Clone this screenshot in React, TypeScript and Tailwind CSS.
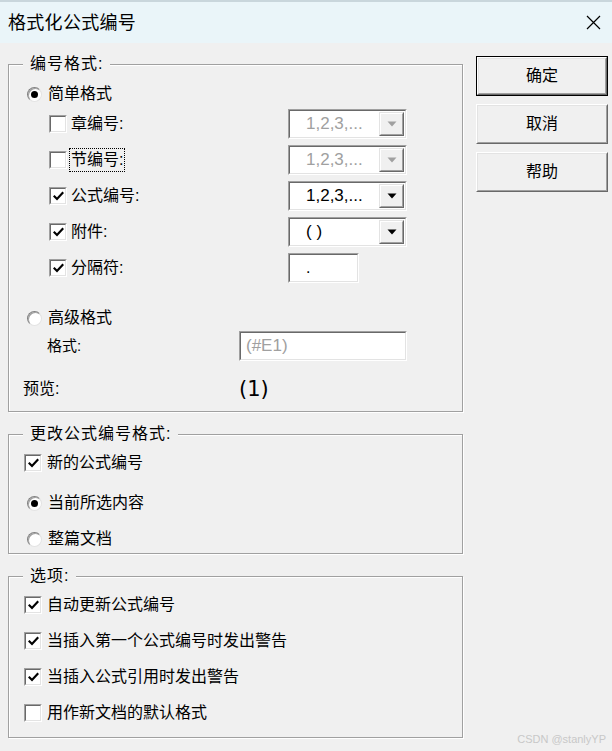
import React from "react";

const FONT = { fontFamily: '"Liberation Sans", "Noto Sans CJK SC", sans-serif' };

function Check() {
  return (
    <svg width="11" height="11" viewBox="0 0 11 11" className="block">
      <path d="M1.5 5.5 L4 8 L9.5 2" fill="none" stroke="#000" strokeWidth="2.2" strokeLinecap="square" />
    </svg>
  );
}

function CheckBox({ checked }: { checked?: boolean }) {
  return (
    <div className="w-[18px] h-[18px] shrink-0 border border-t-[#a0a0a0] border-l-[#a0a0a0] border-b-[#ffffff] border-r-[#ffffff]">
      <div className="w-full h-full border border-t-[#696969] border-l-[#696969] border-b-[#e3e3e3] border-r-[#e3e3e3] bg-white flex items-center justify-center">
        {checked && <Check />}
      </div>
    </div>
  );
}

function Radio({ checked }: { checked?: boolean }) {
  return (
    <div className="w-[15px] h-[15px] shrink-0 rounded-full border border-t-[#808080] border-l-[#808080] border-b-[#e3e3e3] border-r-[#e3e3e3] bg-white flex items-center justify-center shadow-[inset_1px_1px_0_#a0a0a0]">
      {checked && <div className="w-[7px] h-[7px] rounded-full bg-black" />}
    </div>
  );
}

function Combo({ text, disabled }: { text: string; disabled?: boolean }) {
  return (
    <div className="w-[119px] h-[30px] border border-t-[#a0a0a0] border-l-[#a0a0a0] border-b-white border-r-white">
      <div className="w-full h-full border border-t-[#696969] border-l-[#696969] border-b-[#e3e3e3] border-r-[#e3e3e3] bg-white flex items-center justify-between pl-[16px] pr-[1px]">
        <span className={`text-[17px] leading-[20px] ${disabled ? "text-[#a0a0a0]" : "text-black"}`}>{text}</span>
        <div className="w-[25px] h-[24px] border border-t-[#e3e3e3] border-l-[#e3e3e3] border-b-[#696969] border-r-[#696969]">
          <div className="w-full h-full bg-[#f0f0f0] border border-t-white border-l-white border-b-[#a0a0a0] border-r-[#a0a0a0] flex items-center justify-center">
            <svg width="10" height="6" viewBox="0 0 10 6" className="block">
              <path d="M0.5 0.5 H9.5 L5 5.5 Z" fill={disabled ? "#a0a0a0" : "#000"} />
            </svg>
          </div>
        </div>
      </div>
    </div>
  );
}

function TextBox({ w, children }: { w: string; children: React.ReactNode }) {
  return (
    <div className={`${w} h-[30px] border border-t-[#a0a0a0] border-l-[#a0a0a0] border-b-white border-r-white`}>
      <div className="w-full h-full border border-t-[#696969] border-l-[#696969] border-b-[#e3e3e3] border-r-[#e3e3e3] bg-white flex items-center">
        {children}
      </div>
    </div>
  );
}

function Group({ title, className, children }: { title: string; className: string; children: React.ReactNode }) {
  return (
    <div className={`relative w-[455px] border border-[#a0a0a0] shadow-[1px_1px_0_#ffffff,inset_1px_1px_0_#ffffff] ${className}`}>
      <div className="absolute left-[14px] top-[-12px] bg-[#f0f0f0] px-[7px] text-[16px] leading-[22px] tracking-[1px] text-black">{title}</div>
      {children}
    </div>
  );
}

function Btn({ label, def }: { label: string; def?: boolean }) {
  return (
    <div className={`w-[132px] h-[40px] ${def ? "border border-black" : ""}`}>
      <div className="w-full h-full border border-t-white border-l-white border-b-[#696969] border-r-[#696969]">
        <div className="w-full h-full border border-t-[#e3e3e3] border-l-[#e3e3e3] border-b-[#a0a0a0] border-r-[#a0a0a0] bg-[#f0f0f0] flex items-center justify-center text-[16px] leading-[20px] text-black">
          {label}
        </div>
      </div>
    </div>
  );
}

function CbRow({ label, checked, combo, focus }: { label: string; checked?: boolean; combo?: React.ReactNode; focus?: boolean }) {
  return (
    <div className="h-[36px] flex items-center pl-[40px]">
      <CheckBox checked={checked} />
      <div className="w-[221px] pl-[3px]">
        <span className={`inline-block px-[1px] text-[16px] leading-[22px] ${focus ? "outline outline-1 outline-dotted outline-black" : ""}`}>{label}</span>
      </div>
      {combo}
    </div>
  );
}

export default function App() {
  return (
    <div className="w-[612px] h-[751px] bg-[#f0f0f0] text-black flex flex-col relative" style={FONT}>
      <div className="h-[43px] bg-[#eaf5f9] border-t-[2px] border-[#c9d6dc] flex items-center justify-between pl-[8px] pr-[11px] shrink-0">
        <span className="text-[18px] leading-[24px] tracking-[0.3px]">格式化公式编号</span>
        <svg width="15" height="15" viewBox="0 0 15 15" className="block">
          <path d="M1 1 L14 14 M14 1 L1 14" stroke="#000" strokeWidth="1.2" />
        </svg>
      </div>

      <div className="flex pt-[21px] pl-[8px]">
        <div className="flex flex-col">
          <Group title="编号格式:" className="h-[348px] pt-[17px]">
            <div className="h-[24px] flex items-center pl-[18px] gap-[6px]">
              <Radio checked />
              <span className="text-[16px] leading-[22px]">简单格式</span>
            </div>
            <CbRow label="章编号:" combo={<Combo text="1,2,3,..." disabled />} />
            <CbRow label="节编号:" focus combo={<Combo text="1,2,3,..." disabled />} />
            <CbRow label="公式编号:" checked combo={<Combo text="1,2,3,..." />} />
            <CbRow label="附件:" checked combo={<Combo text="( )" />} />
            <CbRow
              label="分隔符:"
              checked
              combo={
                <TextBox w="w-[71px]">
                  <span className="pl-[16px] text-[16px] leading-[20px]">.</span>
                </TextBox>
              }
            />
            <div className="h-[24px] mt-[20px] flex items-center pl-[18px] gap-[6px]">
              <Radio />
              <span className="text-[16px] leading-[22px]">高级格式</span>
            </div>
            <div className="h-[30px] mt-[1px] flex items-center pl-[38px]">
              <span className="w-[192px] text-[15px] leading-[20px]">格式:</span>
              <TextBox w="w-[168px]">
                <span className="pl-[5px] text-[17px] leading-[20px] text-[#a0a0a0]">(#E1)</span>
              </TextBox>
            </div>
            <div className="h-[24px] mt-[16px] flex items-center pl-[14px]">
              <span className="w-[216px] text-[16px] leading-[22px]">预览:</span>
              <span className="text-[21px] leading-[24px]" style={{ fontFamily: '"DejaVu Sans", sans-serif' }}>(1)</span>
            </div>
          </Group>

          <Group title="更改公式编号格式:" className="mt-[22px] h-[120px] pt-[16px]">
            <div className="h-[24px] flex items-center pl-[15px] gap-[5px]">
              <CheckBox checked />
              <span className="text-[16px] leading-[22px]">新的公式编号</span>
            </div>
            <div className="h-[24px] mt-[16px] flex items-center pl-[18px] gap-[6px]">
              <Radio checked />
              <span className="text-[16px] leading-[22px]">当前所选内容</span>
            </div>
            <div className="h-[24px] mt-[12px] flex items-center pl-[18px] gap-[6px]">
              <Radio />
              <span className="text-[16px] leading-[22px]">整篇文档</span>
            </div>
          </Group>

          <Group title="选项:" className="mt-[22px] h-[162px] pt-[16px]">
            {[
              ["自动更新公式编号", true],
              ["当插入第一个公式编号时发出警告", true],
              ["当插入公式引用时发出警告", true],
              ["用作新文档的默认格式", false],
            ].map(([t, c], i) => (
              <div key={i} className={`h-[24px] flex items-center pl-[15px] gap-[5px] ${i > 0 ? "mt-[12px]" : ""}`}>
                <CheckBox checked={c as boolean} />
                <span className="text-[16px] leading-[22px]">{t as string}</span>
              </div>
            ))}
          </Group>
        </div>

        <div className="flex flex-col gap-[8px] ml-[13px] mt-[-8px]">
          <Btn label="确定" def />
          <Btn label="取消" />
          <Btn label="帮助" />
        </div>
      </div>

      <div className="absolute right-[6px] bottom-[5px] text-[11px] leading-[14px] text-[#c8c8c8]">CSDN @stanlyYP</div>
    </div>
  );
}
